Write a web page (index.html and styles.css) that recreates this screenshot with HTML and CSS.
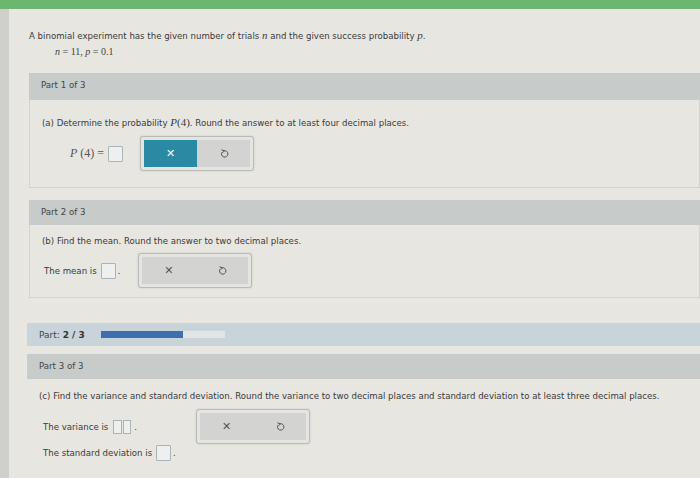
FILE: index.html
```html
<!DOCTYPE html>
<html>
<head>
<meta charset="utf-8">
<link rel="stylesheet" href="styles.css">
</head>
<body>
<div class="topbar"></div>
<div class="page">
  <div class="edge"></div>
  <div class="main">
    <p class="intro">A binomial experiment has the given number of trials <i class="m">n</i> and the given success probability <i class="m">p</i>.</p>
    <p class="given"><i>n</i> = 11, <i>p</i> = 0.1</p>

    <section class="part p1">
      <div class="phead">Part 1 of 3</div>
      <div class="pbody">
        <p class="q">(a) Determine the probability <span class="m"><i>P</i>(4)</span>. Round the answer to at least four decimal places.</p>
        <div class="row r1">
          <span class="m eq"><i>P</i> (4) =</span><span class="box"></span>
          <div class="btns">
            <span class="bx active">✕</span>
            <span class="bu"><svg width="10" height="10" viewBox="0 0 10 10"><path d="M3 3.2 A3.2 3.2 0 1 0 5 1.8" fill="none" stroke="#555" stroke-width="1"/><path d="M2.4 0.8 L5.4 1.8 L3.4 3.9" fill="none" stroke="#555" stroke-width="1"/></svg></span>
          </div>
        </div>
      </div>
    </section>

    <section class="part p2">
      <div class="phead">Part 2 of 3</div>
      <div class="pbody">
        <p class="q">(b) Find the mean. Round the answer to two decimal places.</p>
        <div class="row r2">
          <span>The mean is</span><span class="box"></span><span class="dot">.</span>
          <div class="btns">
            <span class="bx">✕</span>
            <span class="bu"><svg width="10" height="10" viewBox="0 0 10 10"><path d="M3 3.2 A3.2 3.2 0 1 0 5 1.8" fill="none" stroke="#555" stroke-width="1"/><path d="M2.4 0.8 L5.4 1.8 L3.4 3.9" fill="none" stroke="#555" stroke-width="1"/></svg></span>
          </div>
        </div>
      </div>
    </section>

    <div class="progress">
      <span>Part: <b>2 / 3</b></span>
      <div class="track"><div class="fill" style="width:66%"></div></div>
    </div>

    <section class="part p3">
      <div class="phead">Part 3 of 3</div>
      <div class="pbody">
        <p class="q">(c) Find the variance and standard deviation. Round the variance to two decimal places and standard deviation to at least three decimal places.</p>
        <div class="row r3">
          <span>The variance is</span><span class="box dbl"><span></span><span></span></span><span class="dot">.</span>
          <div class="btns">
            <span class="bx">✕</span>
            <span class="bu"><svg width="10" height="10" viewBox="0 0 10 10"><path d="M3 3.2 A3.2 3.2 0 1 0 5 1.8" fill="none" stroke="#555" stroke-width="1"/><path d="M2.4 0.8 L5.4 1.8 L3.4 3.9" fill="none" stroke="#555" stroke-width="1"/></svg></span>
          </div>
        </div>
        <div class="row r4">
          <span>The standard deviation is</span><span class="box"></span><span class="dot">.</span>
        </div>
      </div>
    </section>
  </div>
</div>
</body>
</html>
```
FILE: styles.css
```css
html, body { margin: 0; padding: 0; }
body {
  width: 700px; height: 478px; overflow: hidden;
  background: #e8e6e1;
  font-family: "DejaVu Sans", sans-serif;
  font-size: 8.6px;
  color: #3a3a3a;
}
.topbar { height: 9px; background: #6cb66f; }
.page { display: flex; }
.edge { width: 9px; background: #cfcfcc; height: 470px; flex: none; }
.main { flex: 1; padding-left: 20px; }
p { margin: 0; }
.intro { padding-top: 20px; height: 17px; }
.given { padding-left: 26px; height: 27px; font-family: "Liberation Serif", serif; font-size: 10px; color: #444; }
.m { font-family: "Liberation Serif", serif; font-size: 11px; }
.phead { background: #c7cbca; height: 27px; line-height: 24px; padding-left: 12px; color: #444; }
.pbody { border: 1px solid #d3d2cd; border-top: none; padding: 0 12px; }
.p1 .pbody { height: 87px; }
.p1 .q { padding-top: 16px; }
.row { display: flex; align-items: center; }
.r1 { margin-top: 8px; padding-left: 28px; }
.eq { font-size: 12px; color: #555; }
.box { display: inline-block; width: 13px; height: 14px; border: 1px solid #a9b4b8; background: #eef0ef; margin-left: 4px; border-radius: 1px; }
.dot { margin-left: 2px; }
.btns { display: flex; border: 1px solid #b9bbb9; border-radius: 3px; padding: 3px; background: #e4e4e1; box-shadow: 0 0 2px rgba(0,0,0,0.15); }
.btns span { width: 53px; height: 27px; display: flex; align-items: center; justify-content: center; background: #d3d3d1; color: #555; font-size: 11px; }
.bx.active { background: #2a89a3; color: #fff; }
.r1 .btns { margin-left: 17px; }
.p2 { margin-top: 12px; }
.p2 .phead { height: 25px; }
.p2 .pbody { height: 72px; }
.p2 .q { padding-top: 11px; }
.r2 { margin-top: 7px; padding-left: 2px; }
.r2 .btns { margin-left: 18px; }
.progress { margin-top: 25px; margin-left: -2px; background: #c8d4d9; height: 23px; display: flex; align-items: center; padding-left: 12px; color: #444; font-size: 9px; }
.progress b { color: #333; }
.track { width: 124px; height: 7px; background: #e3e5e4; margin-left: 16px; }
.fill { height: 100%; background: #3c6fae; }
.p3 { margin-top: 8px; margin-left: -2px; }
.p3 .phead { height: 25px; }
.p3 .pbody { border: none; }
.p3 .q { padding-top: 12px; }
.r3 { margin-top: 8px; padding-left: 4px; }
.box.dbl { display: inline-flex; width: 18px; padding: 0 1px; gap: 1px; border: none; background: none; }
.box.dbl span { flex: 1; border: 1px solid #a9b4b8; background: #eef0ef; }
.r3 .btns { margin-left: 59px; }
.r4 { margin-top: 1px; padding-left: 4px; }
```
